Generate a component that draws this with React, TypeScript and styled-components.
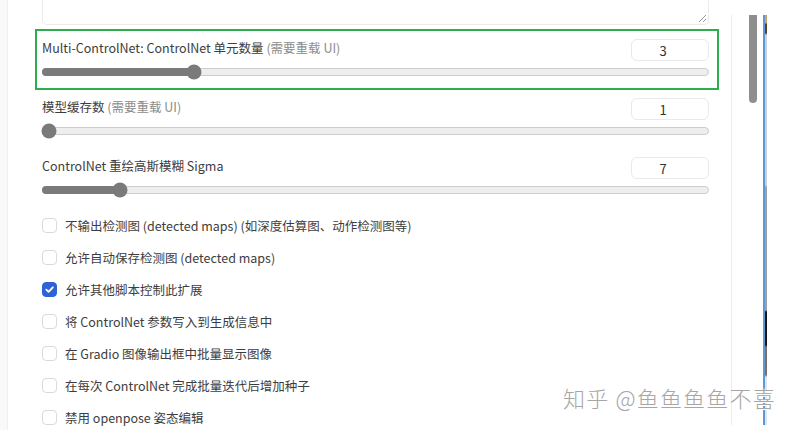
import React from "react";
import styled, { createGlobalStyle } from "styled-components";

const GlobalStyle = createGlobalStyle`
  html, body { margin: 0; padding: 0; background: #fff; }
  body { font-family: "Noto Sans CJK SC", "Noto Sans", sans-serif; }
  * { box-sizing: border-box; }
`;

const Page = styled.div`
  position: relative;
  display: flex;
  width: 800px;
  height: 430px;
  overflow: hidden;
  background: #fff;
`;

const Gutter = styled.div`
  flex: none;
  width: 8px;
  background: #f9f9f9;
  border-right: 1px solid #efefef;
`;

const Panel = styled.div`
  flex: none;
  width: 723px;
  height: 430px;
  padding: 0 22px 0 34px;
  display: flex;
  flex-direction: column;
  overflow: hidden;
`;

const TextareaStub = styled.div`
  flex: none;
  height: 25px;
  margin-bottom: 14px;
  border: 1px solid #ececec;
  border-top: none;
  border-radius: 0 0 5px 5px;
  display: flex;
  justify-content: flex-end;
  align-items: flex-end;
  padding: 0 1px 1px 0;
  color: #9a9a9a;
`;

const Settings = styled.div`
  display: flex;
  flex-direction: column;
  gap: 18px;
`;

const Highlight = styled.div`
  margin: -10px -10px -10px -7px;
  padding: 8px 8px 8px 5px;
  border: 2px solid #2fad4e;
`;

const Row = styled.div`
  display: flex;
  flex-direction: column;
`;

const LabelLine = styled.div`
  display: flex;
  justify-content: space-between;
  align-items: center;
  height: 22px;
`;

const Label = styled.span`
  font-size: 12.5px;
  color: #3d3d3d;
  padding-bottom: 6px;
  white-space: nowrap;
`;

const Hint = styled.span`
  color: #8c8c8c;
`;

const NumberBox = styled.div`
  width: 78px;
  height: 22px;
  border: 1px solid #e9e9e9;
  border-radius: 6px;
  display: flex;
  align-items: center;
  justify-content: center;
  padding-right: 14px;
  font-size: 13px;
  color: #333;
`;

const SliderRoot = styled.div`
  margin-top: 3px;
  height: 16px;
  display: flex;
  align-items: center;
`;

const Track = styled.div`
  position: relative;
  flex: 1;
  height: 8px;
  border: 1px solid #cdcdcd;
  background: #eeeeee;
  border-radius: 4px;
`;

const Fill = styled.div`
  position: absolute;
  left: -1px;
  top: -1px;
  bottom: -1px;
  background: #7a7a7a;
  border-radius: 4px 0 0 4px;
`;

const Thumb = styled.div`
  position: absolute;
  top: 50%;
  width: 15px;
  height: 15px;
  border-radius: 50%;
  background: #7a7a7a;
  transform: translate(-50%, -50%);
`;

const Checks = styled.div`
  display: flex;
  flex-direction: column;
  gap: 12px;
  margin-top: -1px;
`;

const CheckRow = styled.div`
  display: flex;
  align-items: center;
  gap: 8px;
  height: 20px;
`;

const Box = styled.div<{ $checked?: boolean }>`
  flex: none;
  width: 15px;
  height: 15px;
  border-radius: 4px;
  border: 1px solid ${(p) => (p.$checked ? "#2f62d8" : "#dadada")};
  background: ${(p) => (p.$checked ? "#2f62d8" : "#fff")};
  display: flex;
  align-items: center;
  justify-content: center;
`;

const CheckText = styled.span`
  font-size: 12.5px;
  color: #3d3d3d;
  white-space: nowrap;
`;

const Sidebar = styled.div`
  flex: 1;
  margin-top: 15px;
  height: 410px;
  border-left: 1px solid #ececec;
  display: flex;
  padding-left: 17px;
  gap: 6px;
`;

const ScrollThumb = styled.div`
  width: 8px;
  height: 88px;
  background: #8e8e8e;
  border-radius: 0 0 4px 4px;
`;

const Strip = styled.div`
  width: 4px;
  height: 410px;
  border-left: 2px solid #5b9ad6;
  background: linear-gradient(
    to bottom,
    #caa464 0px,
    #caa464 8px,
    #5a4030 9px,
    #5a4030 18px,
    #c6d0de 20px,
    #c6d0de 170px,
    #9ca2ad 172px,
    #9ca2ad 295px,
    #1c1515 297px,
    #1c1515 330px,
    #7d6e66 332px,
    #7d6e66 360px,
    #dfe5ed 362px,
    #dfe5ed 410px
  );
`;

const Watermark = styled.div`
  position: absolute;
  left: 563px;
  top: 381px;
  font-size: 22px;
  font-weight: 300;
  letter-spacing: 1.2px;
  color: #a6a6a6;
  text-shadow: 0 0 1px #fff, 1px 1px 0 #fff;
  white-space: nowrap;
  pointer-events: none;
`;

type SliderSpec = {
  label: string;
  hint?: string;
  value: number;
  min: number;
  max: number;
};

const sliders: SliderSpec[] = [
  { label: "Multi-ControlNet: ControlNet 单元数量", hint: "(需要重载 UI)", value: 3, min: 1, max: 10 },
  { label: "模型缓存数", hint: "(需要重载 UI)", value: 1, min: 1, max: 10 },
  { label: "ControlNet 重绘高斯模糊 Sigma", value: 7, min: 0, max: 64 },
];

const checks: { text: string; checked?: boolean }[] = [
  { text: "不输出检测图 (detected maps) (如深度估算图、动作检测图等)" },
  { text: "允许自动保存检测图 (detected maps)" },
  { text: "允许其他脚本控制此扩展", checked: true },
  { text: "将 ControlNet 参数写入到生成信息中" },
  { text: "在 Gradio 图像输出框中批量显示图像" },
  { text: "在每次 ControlNet 完成批量迭代后增加种子" },
  { text: "禁用 openpose 姿态编辑" },
];

const SliderRow: React.FC<{ s: SliderSpec }> = ({ s }) => {
  const f = (s.value - s.min) / (s.max - s.min);
  const pos = `calc(6px + (100% - 12px) * ${f})`;
  return (
    <Row>
      <LabelLine>
        <Label>
          {s.label}
          {s.hint && <Hint> {s.hint}</Hint>}
        </Label>
        <NumberBox>{s.value}</NumberBox>
      </LabelLine>
      <SliderRoot>
        <Track>
          <Fill style={{ width: pos }} />
          <Thumb style={{ left: pos }} />
        </Track>
      </SliderRoot>
    </Row>
  );
};

export default function App() {
  return (
    <>
      <GlobalStyle />
      <Page>
        <Gutter />
        <Panel>
          <TextareaStub>
            <svg width="9" height="9" viewBox="0 0 9 9">
              <path d="M1 8 L8 1 M5 8 L8 5" stroke="#999" strokeWidth="1" fill="none" />
            </svg>
          </TextareaStub>
          <Settings>
            <Highlight>
              <SliderRow s={sliders[0]} />
            </Highlight>
            <SliderRow s={sliders[1]} />
            <SliderRow s={sliders[2]} />
            <Checks>
              {checks.map((c) => (
                <CheckRow key={c.text}>
                  <Box $checked={c.checked}>
                    {c.checked && (
                      <svg width="11" height="11" viewBox="0 0 12 12">
                        <path d="M2.5 6.2 L5 8.6 L9.6 3.6" stroke="#fff" strokeWidth="2" fill="none" strokeLinecap="round" strokeLinejoin="round" />
                      </svg>
                    )}
                  </Box>
                  <CheckText>{c.text}</CheckText>
                </CheckRow>
              ))}
            </Checks>
          </Settings>
        </Panel>
        <Sidebar>
          <ScrollThumb />
          <Strip />
        </Sidebar>
        <Watermark>知乎 @鱼鱼鱼鱼不喜</Watermark>
      </Page>
    </>
  );
}
